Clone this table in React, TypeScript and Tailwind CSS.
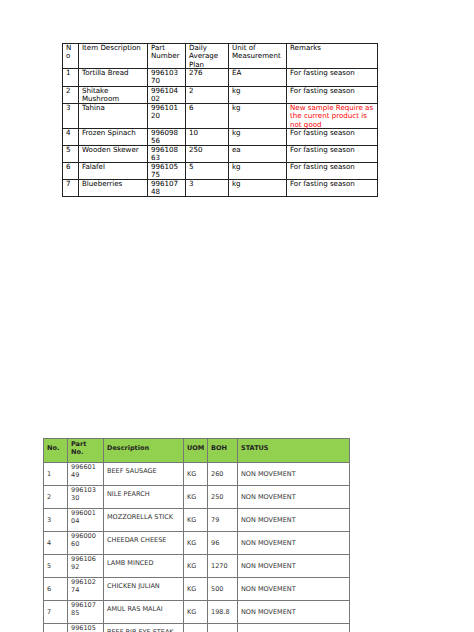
const topRows = [
  { no: "1", item: "Tortilla Bread", part: ["996103", "70"], plan: "276", unit: "EA", remark: "For fasting season" },
  { no: "2", item: "Shitake Mushroom", part: ["996104", "02"], plan: "2", unit: "kg", remark: "For fasting season" },
  { no: "3", item: "Tahina", part: ["996101", "20"], plan: "6", unit: "kg", remark: "New sample Require as the current product is not good", red: true },
  { no: "4", item: "Frozen Spinach", part: ["996098", "56"], plan: "10", unit: "kg", remark: "For fasting season" },
  { no: "5", item: "Wooden Skewer", part: ["996108", "63"], plan: "250", unit: "ea", remark: "For fasting season" },
  { no: "6", item: "Falafel", part: ["996105", "75"], plan: "5", unit: "kg", remark: "For fasting season" },
  { no: "7", item: "Blueberries", part: ["996107", "48"], plan: "3", unit: "kg", remark: "For fasting season" },
]

const stock = [
  { no: "1", part: ["996601", "49"], desc: "BEEF SAUSAGE", uom: "KG", boh: "260", status: "NON MOVEMENT" },
  { no: "2", part: ["996103", "30"], desc: "NILE PEARCH", uom: "KG", boh: "250", status: "NON MOVEMENT" },
  { no: "3", part: ["996001", "04"], desc: "MOZZORELLA STICK", uom: "KG", boh: "79", status: "NON MOVEMENT" },
  { no: "4", part: ["996000", "60"], desc: "CHEEDAR CHEESE", uom: "KG", boh: "96", status: "NON MOVEMENT" },
  { no: "5", part: ["996106", "92"], desc: "LAMB MINCED", uom: "KG", boh: "1270", status: "NON MOVEMENT" },
  { no: "6", part: ["996102", "74"], desc: "CHICKEN JULIAN", uom: "KG", boh: "500", status: "NON MOVEMENT" },
  { no: "7", part: ["996107", "85"], desc: "AMUL RAS MALAI", uom: "KG", boh: "198.8", status: "NON MOVEMENT" },
  { no: "8", part: ["996105", ""], desc: "BEEF RIB EYE STEAK", uom: "KG", boh: "", status: "NON MOVEMENT" },
]

const tc = "bg-white px-[3px] min-h-0"
const bc = "bg-white px-[3px] flex items-center min-h-0"
const hd = "flex items-center bg-[#92d050] px-[3px] pb-[4px] font-bold text-[#222]"

export default function App() {
  return (
    <div className="h-screen overflow-hidden bg-white font-['DejaVu_Sans',sans-serif]">
      {/* requested items */}
      <div className="pt-[43px] pl-[62px]">
        <div className="grid w-fit grid-cols-[15px_68px_37px_42px_57px_90px] grid-rows-[24px_17px_16px_24px_16px_16px_16px_16px] gap-px bg-[#222] p-px text-[7.1px] leading-[8.4px] text-black">
          <div className={tc}>N<br />o</div>
          <div className={tc}>Item Description</div>
          <div className={tc}>Part<br />Number</div>
          <div className={tc}>Daily<br />Average<br />Plan</div>
          <div className={tc}>Unit of<br />Measurement</div>
          <div className={tc}>Remarks</div>
          {topRows.map((r) => (
            <div key={r.no} className="contents">
              <div className={tc}>{r.no}</div>
              <div className={tc}>{r.item}</div>
              <div className={tc}>{r.part[0]}<br />{r.part[1]}</div>
              <div className={tc}>{r.plan}</div>
              <div className={tc}>{r.unit}</div>
              <div className={`${tc} ${r.red ? "text-[#ff0000]" : ""}`}>{r.remark}</div>
            </div>
          ))}
        </div>
      </div>

      {/* non movement stock */}
      <div className="pt-[241px] pl-[43px]">
        <div className="grid w-fit grid-cols-[23px_35px_79px_23px_29px_111px] grid-rows-[23px_repeat(8,22px)] gap-px bg-[#777] p-px text-[6.5px] leading-[7.6px] text-[#333]">
          <div className={hd}>No.</div>
          <div className={hd}>Part<br />No.</div>
          <div className={hd}>Description</div>
          <div className={hd}>UOM</div>
          <div className={hd}>BOH</div>
          <div className={hd}>STATUS</div>
          {stock.map((s) => (
            <div key={s.no} className="contents">
              <div className={`${bc} pt-[2px]`}>{s.no}</div>
              <div className="min-h-0 bg-white px-[3px] pt-[1px]">{s.part[0]}<br />{s.part[1]}</div>
              <div className={`${bc} pb-[4px]`}>{s.desc}</div>
              <div className={`${bc} pt-[2px]`}>{s.uom}</div>
              <div className={`${bc} pt-[2px]`}>{s.boh}</div>
              <div className={`${bc} pt-[2px]`}>{s.status}</div>
            </div>
          ))}
        </div>
      </div>
    </div>
  )
}
